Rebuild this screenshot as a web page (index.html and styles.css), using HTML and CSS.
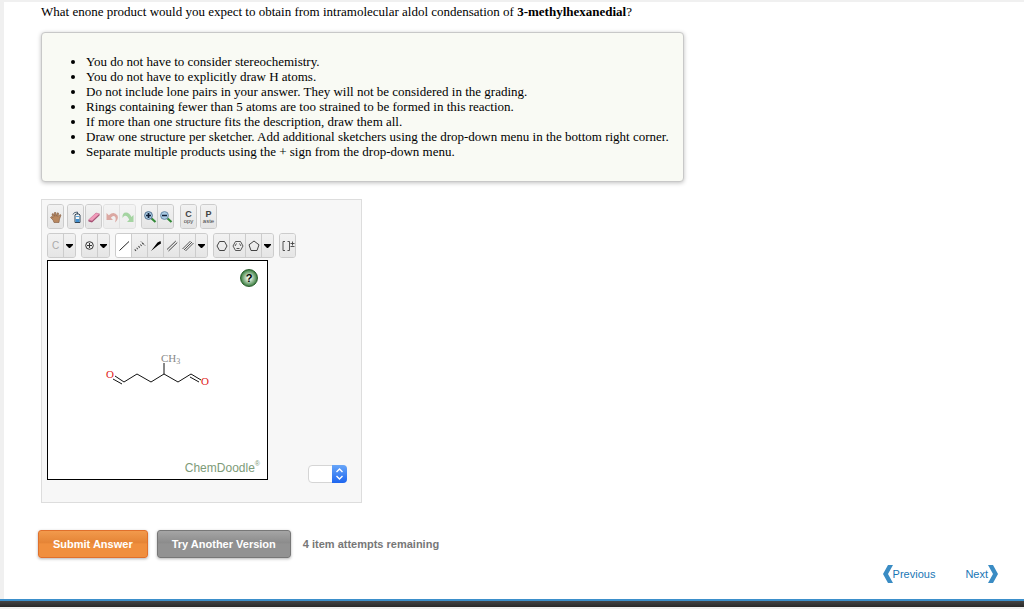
FILE: index.html
```html
<!DOCTYPE html>
<html lang="en">
<head>
  <meta charset="UTF-8">
  <meta name="viewport" content="width=device-width, initial-scale=1.0">
  <title>Aldol Condensation</title>
  <link rel="stylesheet" href="styles.css">
</head>
<body>
  <main class="page">
    <p class="question">What enone product would you expect to obtain from intramolecular aldol condensation of <b>3-methylhexanedial</b>?</p>

    <ul class="notes">
      <li>You do not have to consider stereochemistry.</li>
      <li>You do not have to explicitly draw H atoms.</li>
      <li>Do not include lone pairs in your answer. They will not be considered in the grading.</li>
      <li>Rings containing fewer than 5 atoms are too strained to be formed in this reaction.</li>
      <li>If more than one structure fits the description, draw them all.</li>
      <li>Draw one structure per sketcher. Add additional sketchers using the drop-down menu in the bottom right corner.</li>
      <li>Separate multiple products using the + sign from the drop-down menu.</li>
    </ul>

    <section class="sketcher">
      <!-- Editing tools -->
      <div class="toolbar">
        <div class="group"><button class="tool" aria-label="Move">
          <svg width="14" height="14" viewBox="0 0 14 14"><path d="M5 12.500 L4 10 L1.500 7.500 L2.300 6.600 L4 7.700 L3 4 L4.200 3.600 L5.500 6.200 L5.500 2.500 H6.800 L7.200 6.200 L8.400 2.800 L9.600 3.200 L9 6.500 L11 4.500 L12 5.200 L10.500 9 L10 12.500 Z" fill="#b98860" stroke="#80583c" stroke-width=".6"/></svg>
        </button></div>
        <div class="edit">
          <div class="group"><button class="tool" aria-label="Clear">
            <svg width="14" height="14" viewBox="0 0 14 14"><path d="M4 4.500 Q4.500 2 8.500 2 V4" fill="none" stroke="#567"/><path d="M6 5 L7 4 H10 L11 5 V12.500 H6 Z" fill="#f4f9fc" stroke="#345"/><path d="M6.500 9 H10.500 V12 H6.500 Z" fill="#3f8fd0"/><path d="M7 6.500 H10" stroke="#58a5dc"/></svg>
          </button></div>
          <div class="group"><button class="tool" aria-label="Erase">
            <svg width="14" height="14" viewBox="0 0 14 14"><path d="M1.500 10 L9 3 L12.500 4 L5 11 Z" fill="#f19aba" stroke="#cd7295" stroke-width=".7"/><path d="M1.500 10 L5 11 L12.500 4 V5.500 L5 12.500 L1.500 11.500 Z" fill="#a55073"/></svg>
          </button></div>
          <div class="group faded">
            <button class="tool" aria-label="Undo" disabled>
              <svg width="14" height="14" viewBox="0 0 14 14"><path d="M1.500 3 V10 H8 L5.800 7.700 Q8.500 4.500 10.300 7 Q11.500 9 10 12.500 Q14 9 12.500 5.500 Q9 0.500 3.800 5.300 Z" fill="#c05c50"/></svg>
            </button>
            <button class="tool" aria-label="Redo" disabled>
              <svg width="14" height="14" viewBox="0 0 14 14"><path d="M12.500 5 V12 H6 L8.200 9.700 Q6.500 5.500 4 5.700 Q2.500 6 1.500 8 Q1 2.500 5 2.500 Q8.500 2.500 10.400 7 Z" fill="#55b350"/></svg>
            </button>
          </div>
        </div>
        <div class="group spaced">
          <button class="tool" aria-label="Zoom in">
            <svg width="14" height="14" viewBox="0 0 14 14"><path d="M8 8 L12.500 12" stroke="#348a38" stroke-width="2.200"/><circle cx="5.500" cy="5.500" r="3.900" fill="#a9cce5" stroke="#52708e"/><path d="M3 5.500 H8 M5.500 3 V8" stroke="#111f38" stroke-width="1.700"/></svg>
          </button>
          <button class="tool" aria-label="Zoom out">
            <svg width="14" height="14" viewBox="0 0 14 14"><path d="M8 8 L12.500 12" stroke="#348a38" stroke-width="2.200"/><circle cx="5.500" cy="5.500" r="3.900" fill="#a9cce5" stroke="#6b8aa5"/><path d="M3 5.500 H8" stroke="#111f38" stroke-width="1.700"/></svg>
          </button>
        </div>
        <div class="group far"><button class="tool word"><b>C</b><small>opy</small></button></div>
        <div class="group"><button class="tool word"><b>P</b><small>aste</small></button></div>
      </div>

      <!-- Drawing tools -->
      <div class="toolbar drawing">
        <div class="group">
          <button class="tool element">C</button>
          <button class="tool arrow" aria-label="Choose element"><svg width="7" height="4" viewBox="0 0 7 4"><path d="M0 0 H7 V1 L4 4 H3 L0 1 Z"/></svg></button>
        </div>
        <div class="group">
          <button class="tool" aria-label="Increase charge">
            <svg width="13" height="13" viewBox="0 0 13 13"><g fill="none" stroke="#333"><circle cx="6.500" cy="6.500" r="3.800"/><path d="M4 6.500 H9 M6.500 4 V9"/></g></svg>
          </button>
          <button class="tool arrow" aria-label="Choose charge"><svg width="7" height="4" viewBox="0 0 7 4"><path d="M0 0 H7 V1 L4 4 H3 L0 1 Z"/></svg></button>
        </div>
        <div class="group">
          <button class="tool active" aria-label="Single bond">
            <svg width="14" height="14" viewBox="0 0 14 14"><path d="M2.500 11.500 L12 2.500" stroke="#222"/></svg>
          </button>
          <button class="tool" aria-label="Recessed bond">
            <svg width="14" height="14" viewBox="0 0 14 14"><path d="M2 11.500 L10.500 4" stroke="#444" stroke-width="2" stroke-dasharray="1 1.500"/><path d="M8 2.500 L12 6.500" stroke="#555" stroke-dasharray="1.500 .7"/></svg>
          </button>
          <button class="tool" aria-label="Protruding bond">
            <svg width="14" height="14" viewBox="0 0 14 14"><path d="M2 12 L8.500 3.500 L11.500 2 L12 4.500 L9.500 6 Z"/></svg>
          </button>
          <button class="tool" aria-label="Double bond">
            <svg width="14" height="14" viewBox="0 0 14 14"><path d="M2 10.500 L10.800 2 M3.500 12 L12.300 3.500" stroke="#444"/></svg>
          </button>
          <button class="tool" aria-label="Triple bond">
            <svg width="14" height="14" viewBox="0 0 14 14"><path d="M1.500 10 L9.500 2 M3 11 L11 3 M4.500 12 L12.500 4" stroke="#444" stroke-width=".9"/></svg>
          </button>
          <button class="tool arrow" aria-label="More bonds"><svg width="7" height="4" viewBox="0 0 7 4"><path d="M0 0 H7 V1 L4 4 H3 L0 1 Z"/></svg></button>
        </div>
        <div class="group">
          <button class="tool" aria-label="Cyclohexane">
            <svg width="14" height="14" viewBox="0 0 14 14"><path d="M4.500 2.500 H9.500 L12 7 L9.500 11.500 H4.500 L2 7 Z" fill="none" stroke="#444"/></svg>
          </button>
          <button class="tool" aria-label="Benzene">
            <svg width="14" height="14" viewBox="0 0 14 14"><path d="M4.500 2.500 H9.500 L12 7 L9.500 11.500 H4.500 L2 7 Z M5.500 4.500 L4 7 M5.500 9.500 H8.500 M10 7 L8.500 4.500" fill="none" stroke="#444" stroke-width=".9"/></svg>
          </button>
          <button class="tool" aria-label="Cyclopentane">
            <svg width="14" height="14" viewBox="0 0 14 14"><path d="M7 2 L12 5.800 L10 11.500 H4 L2 5.800 Z" fill="none" stroke="#444"/></svg>
          </button>
          <button class="tool arrow" aria-label="More rings"><svg width="7" height="4" viewBox="0 0 7 4"><path d="M0 0 H7 V1 L4 4 H3 L0 1 Z"/></svg></button>
        </div>
        <div class="group"><button class="tool" aria-label="Bracket">
          <svg width="14" height="14" viewBox="0 0 14 14"><path d="M4 2.500 H2 V11.500 H4 M6.500 2.500 H8.500 V11.500 H6.500 M9.500 4.500 H13.500 M11.500 2.500 V6.500 M9.500 7.500 H13.500" fill="none" stroke="#444" stroke-width=".9"/></svg>
        </button></div>
      </div>

      <div class="workspace">
        <div class="canvas">
          <svg class="molecule" width="219" height="218" viewBox="0 0 219 218">
            <g fill="none" stroke="#111">
              <path d="M76 121 L89 113 L103 121 L116 113 L130 121 L143 113"/>
              <path d="M116 113 V102"/>
              <path d="M67 115 L76 121 M65 118 L74 123"/>
              <path d="M143 113 L153 119 M142 116 L151 121"/>
            </g>
            <text class="oxygen" x="58" y="117">O</text>
            <text class="oxygen" x="153" y="124">O</text>
            <text class="methyl" x="113" y="101">CH<tspan class="sub" dy="2">3</tspan></text>
          </svg>
          <button class="help" aria-label="Help">?</button>
          <span class="brand">ChemDoodle<sup>®</sup></span>
        </div>
        <div class="picker">
          <select class="choice" aria-label="Add sketcher">
            <option></option>
            <option>+</option>
          </select>
          <svg class="stepper" width="15" height="18" viewBox="0 0 15 18"><path d="M4.500 7 L7.500 4 L10.500 7 M4.500 11 L7.500 14 L10.500 11" fill="none" stroke="#fff" stroke-width="1.400"/></svg>
        </div>
      </div>
    </section>

    <div class="actions">
      <button class="btn submit">Submit Answer</button>
      <button class="btn retry">Try Another Version</button>
      <span class="attempts">4 item attempts remaining</span>
    </div>

    <nav class="pager">
      <a href="#"><svg width="10" height="18" viewBox="0 0 10 18"><path d="M5 0 H10 L5 9 L10 18 H5 L0 9 Z"/></svg>Previous</a>
      <a href="#">Next<svg width="10" height="18" viewBox="0 0 10 18"><path d="M0 0 H5 L10 9 L5 18 H0 L5 9 Z"/></svg></a>
    </nav>
  </main>
  <footer class="footer"></footer>
</body>
</html>
```
FILE: styles.css
```css
* {
  box-sizing: border-box;
}

body {
  display: flex;
  flex-direction: column;
  min-height: 100vh;
  margin: 0;
  background-color: #f0f0f0;
  font-family: "Liberation Sans", Arial, sans-serif;
}

/* White page area */
.page {
  flex: 1;
  margin: 2px 0 0 4px;
  padding: 2px 26px 0 37px;
  background-color: #fff;
}

.question {
  margin: 0;
  font-family: "Liberation Serif", "Times New Roman", serif;
  font-size: 13px;
  line-height: 15px;
}

.notes {
  width: fit-content;
  margin: 13px 0 0;
  padding: 21px 14px 22px 44px;
  border: 1px solid #c8c8c8;
  border-radius: 4px;
  background-color: #f9faf4;
  box-shadow: 0 1px 4px rgba(0, 0, 0, 0.25);
  font-family: "Liberation Serif", "Times New Roman", serif;
  font-size: 13px;
  line-height: 15px;
}

/* Sketcher panel */
.sketcher {
  width: fit-content;
  margin-top: 17px;
  padding: 4px 14px 22px 5px;
  border: 1px solid #ddd;
  background-color: #f7f7f7;
}

.toolbar {
  display: flex;
  gap: 3px;
}

.drawing {
  gap: 5px;
  margin: 4px 0 2px;
}

.edit {
  display: flex;
  gap: 1px;
}

.group {
  display: flex;
  border: 1px solid #ccc;
  border-radius: 3px;
  background-color: #e9e9e9;
  overflow: hidden;
}

.spaced {
  margin-left: 2px;
}

.far {
  margin-left: 3px;
}

.faded {
  opacity: 0.5;
}

.tool {
  box-sizing: content-box;
  display: flex;
  justify-content: center;
  align-items: center;
  width: 15px;
  height: 23px;
  padding: 0;
  border: none;
  background: linear-gradient(#f2f2f2, #e5e5e5);
  font-family: "Liberation Sans", Arial, sans-serif;
}

.tool svg {
  flex: none;
}

.tool + .tool {
  border-left: 1px solid #ccc;
}

.arrow {
  width: 11px;
}

.active {
  background: #fff;
}

.element {
  color: #aaa;
  font-size: 10px;
}

.word {
  flex-direction: column;
  color: #444;
}

.word b {
  font-size: 9px;
  line-height: 8px;
}

.word small {
  font-size: 6px;
  line-height: 6px;
}

/* Drawing canvas and sketcher picker */
.workspace {
  display: flex;
  align-items: flex-end;
  gap: 40px;
}

.canvas {
  position: relative;
  border: 1px solid #000;
  background-color: #fff;
}

.molecule {
  display: block;
  font-family: "Liberation Serif", "Times New Roman", serif;
  font-size: 11px;
}

.oxygen {
  fill: #e02020;
}

.methyl {
  fill: #888;
}

.sub {
  font-size: 8px;
}

.help {
  position: absolute;
  top: 8px;
  right: 9px;
  width: 18px;
  height: 18px;
  padding: 0;
  border: 1px solid #285c2b;
  border-radius: 50%;
  background: radial-gradient(#e8f4e8 15%, #347a38 75%);
  font: bold 11px/16px "Liberation Sans", Arial, sans-serif;
  color: #000;
}

.brand {
  position: absolute;
  right: 7px;
  bottom: 3px;
  color: #7d9b78;
  font-size: 12px;
  line-height: 15px;
}

.brand sup {
  font-size: 7px;
  line-height: 0;
  vertical-align: 6px;
}

.picker {
  position: relative;
  display: flex;
  margin-bottom: -3px;
}

.choice {
  appearance: none;
  width: 39px;
  height: 18px;
  padding: 0 18px 0 4px;
  border: 1px solid #d5d5d5;
  border-radius: 4px;
  background-color: #fff;
  font-size: 11px;
}

.stepper {
  position: absolute;
  top: 0;
  right: 0;
  border-radius: 0 4px 4px 0;
  background: linear-gradient(#68a6f8, #1e66ef);
  pointer-events: none;
}

/* Submit row */
.actions {
  display: flex;
  align-items: center;
  gap: 9px;
  margin: 27px 0 0 -3px;
}

.btn {
  height: 28px;
  padding: 0 14px;
  border: 1px solid #777;
  border-radius: 3px;
  box-shadow: 0 1px 3px rgba(0, 0, 0, 0.3);
  color: #fff;
  font: bold 11px "Liberation Sans", Arial, sans-serif;
}

.submit {
  border-color: #e0702c;
  background: linear-gradient(#f29a4c, #e58436 45%, #f08f3e 50%, #f08f3e);
}

.retry {
  background: linear-gradient(#a5a5a5, #8c8c8c 45%, #929292 50%, #929292);
}

.attempts {
  margin-left: 3px;
  color: #777;
  font-size: 11px;
  font-weight: bold;
}

/* Previous and next links */
.pager {
  display: flex;
  justify-content: flex-end;
  gap: 30px;
  margin-top: 7px;
}

.pager a {
  display: flex;
  align-items: center;
  color: #1a76b5;
  font-size: 11px;
  text-decoration: none;
}

.pager svg {
  fill: #3a8cc4;
}

.footer {
  height: 10px;
  border-top: 2px solid #3b8fcb;
  border-bottom: 2px solid #f0f0f0;
  background: linear-gradient(#444, #282828);
}
```
